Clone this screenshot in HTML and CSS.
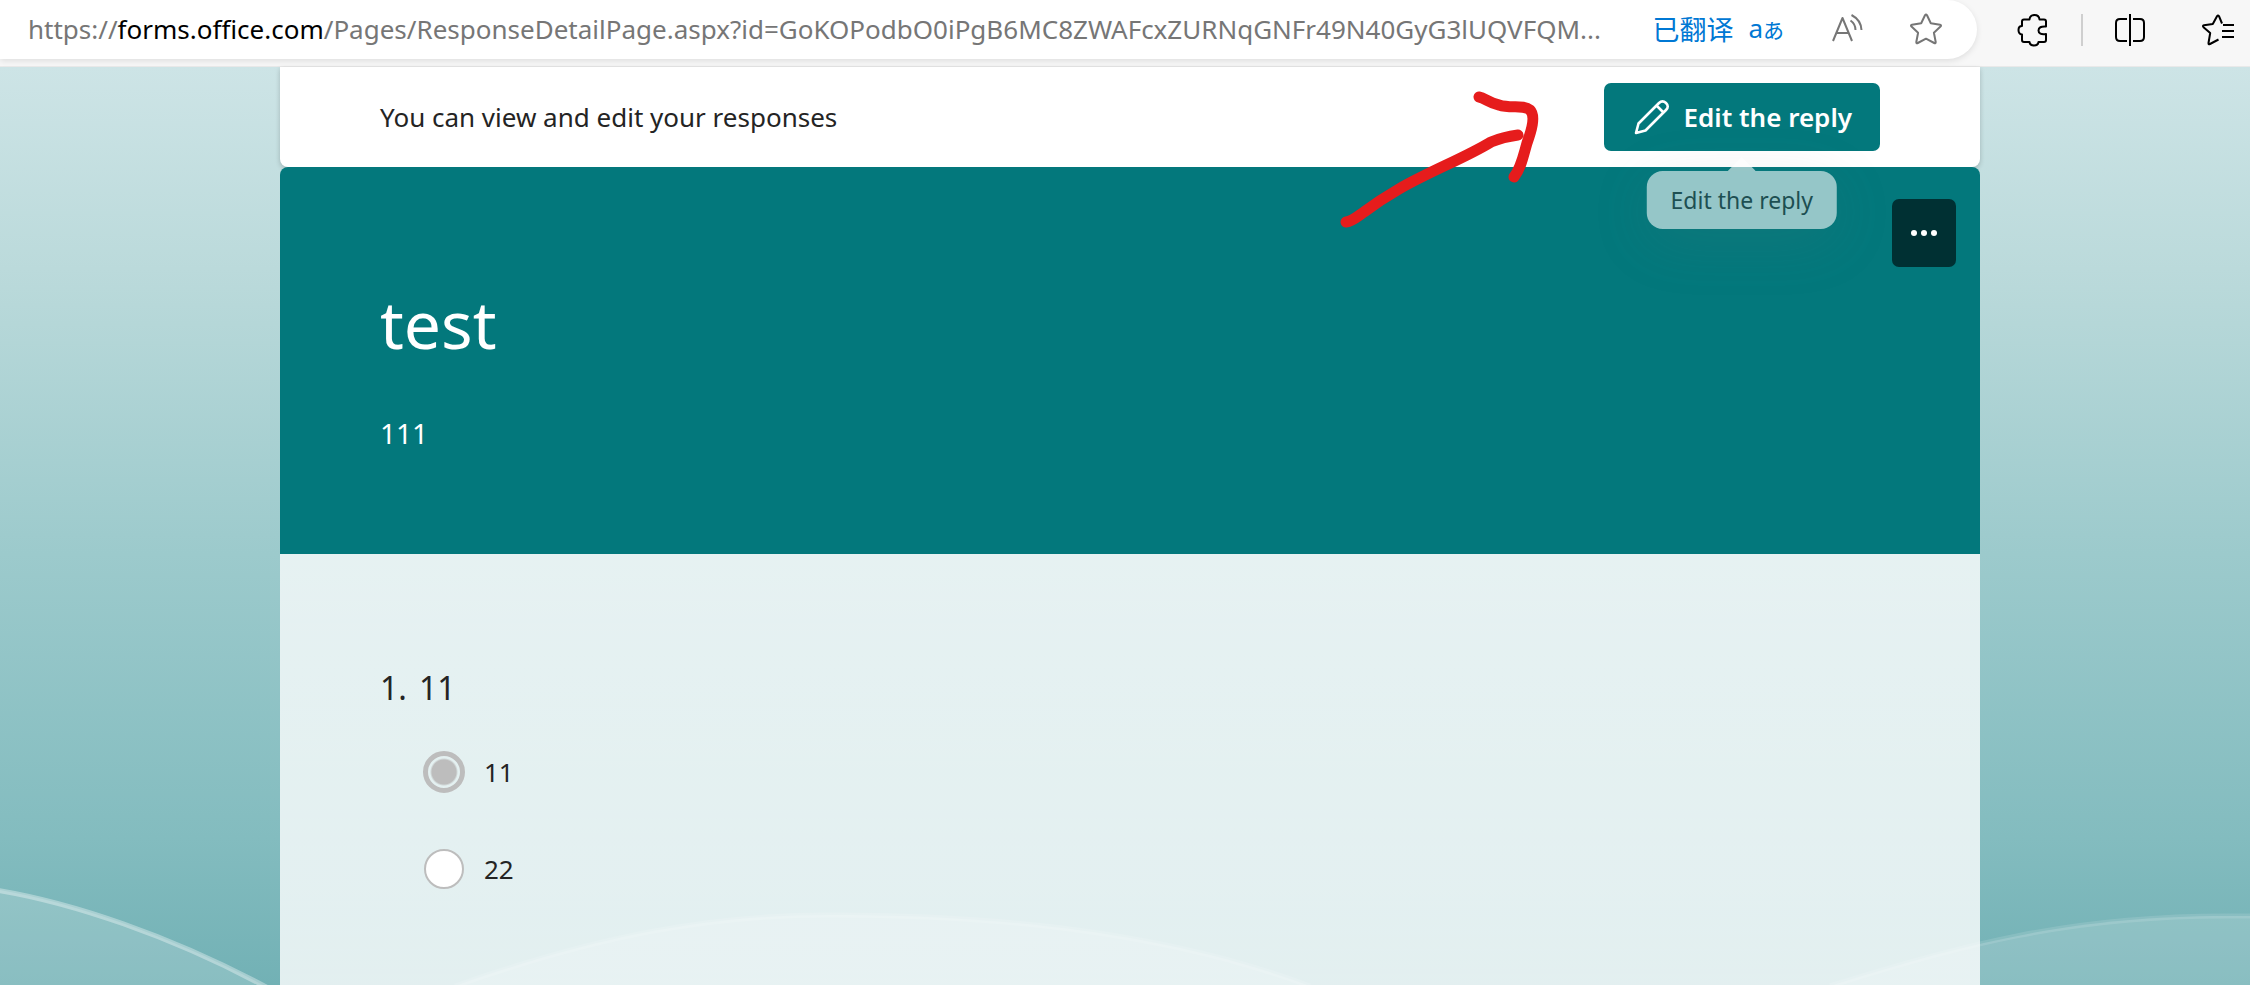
FILE: index.html
```html
<!DOCTYPE html>
<html lang="en">
<head>
<meta charset="utf-8">
<title>test</title>
<link rel="stylesheet" href="styles.css">
</head>
<body>
<div class="toolbar">
  <div class="address">
    <div class="url">https://<span class="host">forms.office.com</span>/Pages/ResponseDetailPage.aspx?id=GoKOPodbO0iPgB6MC8ZWAFcxZURNqGNFr49N40GyG3lUQVFQM...</div>
    <button class="translate" type="button"><span lang="zh">已翻译</span><span class="glyphs" lang="ja"><span class="latin">a</span>あ</span></button>
    <button class="tool" type="button" aria-label="Read aloud">
      <svg class="icon muted" viewBox="0 0 32 32"><path d="M2 28 11.500 5 21 28M5.500 20h12M19.500 7.500Q24.500 11 24.500 17M20.500 2Q30 7 30.500 17"/></svg>
    </button>
    <button class="tool" type="button" aria-label="Add to favorites">
      <svg class="icon muted" viewBox="0 0 32 32"><path d="M15 2.200Q16 .6 17 2.200L20.800 10.200 30 11.800Q31.800 12.200 30.500 13.600L23.900 19.800 25.700 29Q25.800 30.800 24.200 30L16 25.700 7.800 30Q6.200 30.800 6.300 29L8.100 19.800 1.500 13.600Q.2 12.200 2 11.800L11.200 10.200Z"/></svg>
    </button>
  </div>
  <div class="extras">
    <button class="tool" type="button" aria-label="Extensions">
      <svg class="icon" viewBox="0 0 32 32"><path d="M6 5.500h5.500Q12 1 16.500 1T21.500 5.500H26Q28 5.500 28 7.500V12.500Q20.500 12 20.500 16.500T28 20V26Q28 28 26 28H20.500Q20 31.500 16 31.500T11.500 28H6Q4 28 4 26V20.500Q.5 20 .5 16T4 12V7.500Q4 5.500 6 5.500Z"/></svg>
    </button>
    <span class="divider"></span>
    <button class="tool" type="button" aria-label="Split screen">
      <svg class="icon" viewBox="0 0 32 32"><path d="M13 5H6Q2 5 2 9V23Q2 27 6 27H13M19 5H26Q30 5 30 9V23Q30 27 26 27H19M16 0V32"/></svg>
    </button>
    <button class="tool" type="button" aria-label="Favorites">
      <svg class="icon" viewBox="0 0 32 32"><path d="M21 11H32M20 17H32M20 23H32M16.500 25.500 8 30Q6.300 30.800 6.500 29L8.200 19 1.500 13.200Q.2 11.700 2 11.200L10.800 10 15 2.200Q16 .6 17 2.200L20 9.500"/></svg>
    </button>
  </div>
</div>

<main class="page">
  <svg class="waves" viewBox="0 880 2250 105" aria-hidden="true">
    <path class="fill" d="M0 890C70 902 170 935 265 986H0Z"/>
    <path class="crest strong" d="M-4 890C70 902 170 935 270 989"/>
    <path class="fill" d="M455 986C600 935 710 915 829 915C990 915 1160 930 1310 986Z"/>
    <path class="crest" d="M455 986C600 935 710 915 829 915C990 915 1160 930 1310 986"/>
    <path class="fill" d="M1830 986C1960 945 2070 916 2225 916H2250V986Z"/>
    <path class="crest" d="M1830 986C1960 945 2070 916 2225 916H2254"/>
  </svg>

  <div class="card">
    <div class="banner">
      <p class="notice">You can view and edit your responses</p>
      <div class="edit-wrap">
        <button class="edit" type="button" aria-describedby="edit-tip">
          <svg class="pencil" viewBox="0 0 36 36"><path d="M2 34 4.500 24.500 25 4Q28.500.6 32 4T32 11L11.500 31.500ZM22.500 6.500 29.500 13.500"/></svg>
          Edit the reply
        </button>
        <div class="tip" id="edit-tip" role="tooltip">Edit the reply</div>
      </div>
    </div>

    <header class="hero">
      <div>
        <h1 class="title">test</h1>
        <p class="subtitle">111</p>
      </div>
      <button class="more" type="button" aria-label="More options"><span class="dot"></span><span class="dot"></span><span class="dot"></span></button>
    </header>

    <form class="questions">
      <fieldset class="question">
        <legend class="prompt"><span>1.</span><span>11</span></legend>
        <label class="option"><input class="radio" type="radio" name="q1" checked>11</label>
        <label class="option"><input class="radio" type="radio" name="q1">22</label>
      </fieldset>
    </form>

    <svg class="arrow" viewBox="1340 90 200 140" aria-hidden="true">
      <path d="M1346 222C1353 221 1358 216 1364 212Q1380 200 1399 189C1430 171 1465 158 1491 142Q1503 137 1518 135M1479 97C1485 98 1489 103 1499 105C1511 109 1523 104 1530 110C1536 116 1531 132 1527 143C1523 157 1521 168 1514 177"/>
    </svg>
  </div>
</main>
</body>
</html>
```
FILE: styles.css
```css
* { box-sizing: border-box; }

body {
  margin: 0;
  min-height: 100vh;
  display: flex;
  flex-direction: column;
  background: #fff;
  font-family: "Noto Sans", "Noto Sans CJK SC", sans-serif;
  color: #242424;
}

button {
  font: inherit;
  border: 0;
  padding: 0;
  background: none;
}

h1, p { margin: 0; font-weight: 400; }

/* Browser toolbar */
.toolbar {
  display: flex;
  height: 67px;
  background: #f7f7f7;
  border-bottom: 1px solid #e9e9e9;
}

.address {
  flex: 1;
  min-width: 0;
  height: 59px;
  display: flex;
  align-items: center;
  padding: 0 35px 2px 28px;
  background: #fff;
  border-radius: 0 30px 30px 0;
  box-shadow: 0 2px 6px rgba(0, 0, 0, 0.1);
}

.url {
  flex: 1;
  min-width: 0;
  overflow: hidden;
  white-space: nowrap;
  font-size: 26px;
  line-height: 40px;
  color: #767676;
}

.host { color: #000; }

.translate {
  display: flex;
  align-items: center;
  gap: 15px;
  margin-right: 47px;
  font-family: "Noto Sans CJK SC", sans-serif;
  font-size: 27px;
  line-height: 40px;
  color: #0078d4;
}

.glyphs {
  font-family: "Noto Sans CJK JP", sans-serif;
  font-size: 21px;
}

.latin { font-family: "Noto Sans", sans-serif; font-size: 26px; }

.tool { display: flex; flex: none; }
.tool + .tool { margin-left: 47px; }

.icon {
  width: 32px;
  height: 32px;
  fill: none;
  stroke: #000;
  stroke-width: 2;
  stroke-linejoin: round;
  overflow: visible;
}

.muted { stroke: #767676; }

.extras {
  flex: none;
  display: flex;
  align-items: center;
  height: 59px;
  padding: 0 16px 0 41px;
}

.extras .tool + .tool { margin-left: 56px; }

.divider {
  width: 2px;
  height: 32px;
  margin: 0 31px;
  background: #cfcfcf;
}

/* Page backdrop */
.page {
  position: relative;
  flex: 1;
  display: grid;
  grid-template-columns: 28fr 170fr 27fr;
  margin-bottom: 1px;
  background: linear-gradient(#cde4e6, #bbdadb 22%, #9ccacc 53%, #83bcbf 84%, #72b1b5);
}

.waves {
  position: absolute;
  left: 0;
  bottom: 0;
  width: 100%;
}

.fill { fill: rgba(255, 255, 255, 0.17); }
.crest { fill: none; stroke: rgba(255, 255, 255, 0.12); stroke-width: 5; }
.strong { stroke: rgba(255, 255, 255, 0.35); }

/* Form card */
.card {
  position: relative;
  grid-column: 2;
  display: flex;
  flex-direction: column;
}

.banner {
  display: flex;
  align-items: center;
  justify-content: space-between;
  padding: 16px 100px;
  background: #fff;
  border-radius: 0 0 8px 8px;
  box-shadow: 0 2px 5px rgba(0, 0, 0, 0.2);
}

.notice { font-size: 26px; line-height: 36px; }

.edit-wrap { position: relative; z-index: 1; }

.edit {
  display: flex;
  align-items: center;
  gap: 14px;
  height: 68px;
  padding: 0 28px 0 30px;
  border-radius: 7px;
  background: #03787c;
  color: #fff;
  font-size: 26px;
  font-weight: 600;
}

.pencil {
  width: 36px;
  height: 36px;
  fill: none;
  stroke: #fff;
  stroke-width: 2.600;
  stroke-linejoin: round;
}

.tip {
  position: absolute;
  top: calc(100% + 20px);
  left: 50%;
  transform: translateX(-50%);
  padding: 12px 24px;
  border-radius: 16px;
  background: rgba(255, 255, 255, 0.58);
  box-shadow: 0 12px 60px rgba(100, 120, 120, 0.14);
  color: #1d4f52;
  font-size: 23px;
  line-height: 34px;
  white-space: nowrap;
}

.tip::before {
  content: "";
  position: absolute;
  bottom: 100%;
  left: 50%;
  width: 28px;
  height: 14px;
  margin-left: -14px;
  background: rgba(255, 255, 255, 0.58);
  clip-path: polygon(50% 0, 100% 100%, 0 100%);
}

.hero {
  display: flex;
  justify-content: space-between;
  align-items: flex-start;
  min-height: 387px;
  padding: 32px 24px 32px 100px;
  border-radius: 8px 8px 0 0;
  background: #03787c;
  color: #fff;
}

.title { margin-top: 74px; font-size: 66px; line-height: 100px; }
.subtitle { margin-top: 40px; font-size: 28px; line-height: 40px; }

.more {
  display: flex;
  justify-content: center;
  align-items: center;
  gap: 4px;
  width: 64px;
  height: 68px;
  border-radius: 7px;
  background: #003033;
}

.dot { width: 6px; height: 6px; border-radius: 50%; background: #fff; }

.questions {
  flex: 1;
  padding: 110px 100px 32px;
  background: linear-gradient(rgba(255, 255, 255, 0.75), rgba(255, 255, 255, 0.8));
}

.question { margin: 0; padding: 0; border: 0; }

.prompt {
  display: flex;
  gap: 12px;
  padding: 0;
  margin-bottom: 34px;
  font-size: 32px;
  line-height: 48px;
}

.option {
  display: flex;
  align-items: center;
  gap: 18px;
  width: max-content;
  height: 52px;
  margin: 0 0 45px 42px;
  font-size: 26px;
}

.radio {
  appearance: none;
  width: 40px;
  height: 40px;
  margin: 0 2px;
  border: 2px solid #bdbdbd;
  border-radius: 50%;
  background: #fff;
}

.radio:checked {
  width: 42px;
  height: 42px;
  margin: 0 1px;
  border-width: 5px;
  background: radial-gradient(circle, #bdbdbd 12px, rgba(255, 255, 255, 0) 14px);
}

/* Hand-drawn pointer over the card */
.arrow {
  position: absolute;
  top: 23px;
  right: 440px;
  width: 200px;
  height: 140px;
  overflow: visible;
  fill: none;
  stroke: #e61c1c;
  stroke-width: 11;
  stroke-linecap: round;
  stroke-linejoin: round;
}
```
